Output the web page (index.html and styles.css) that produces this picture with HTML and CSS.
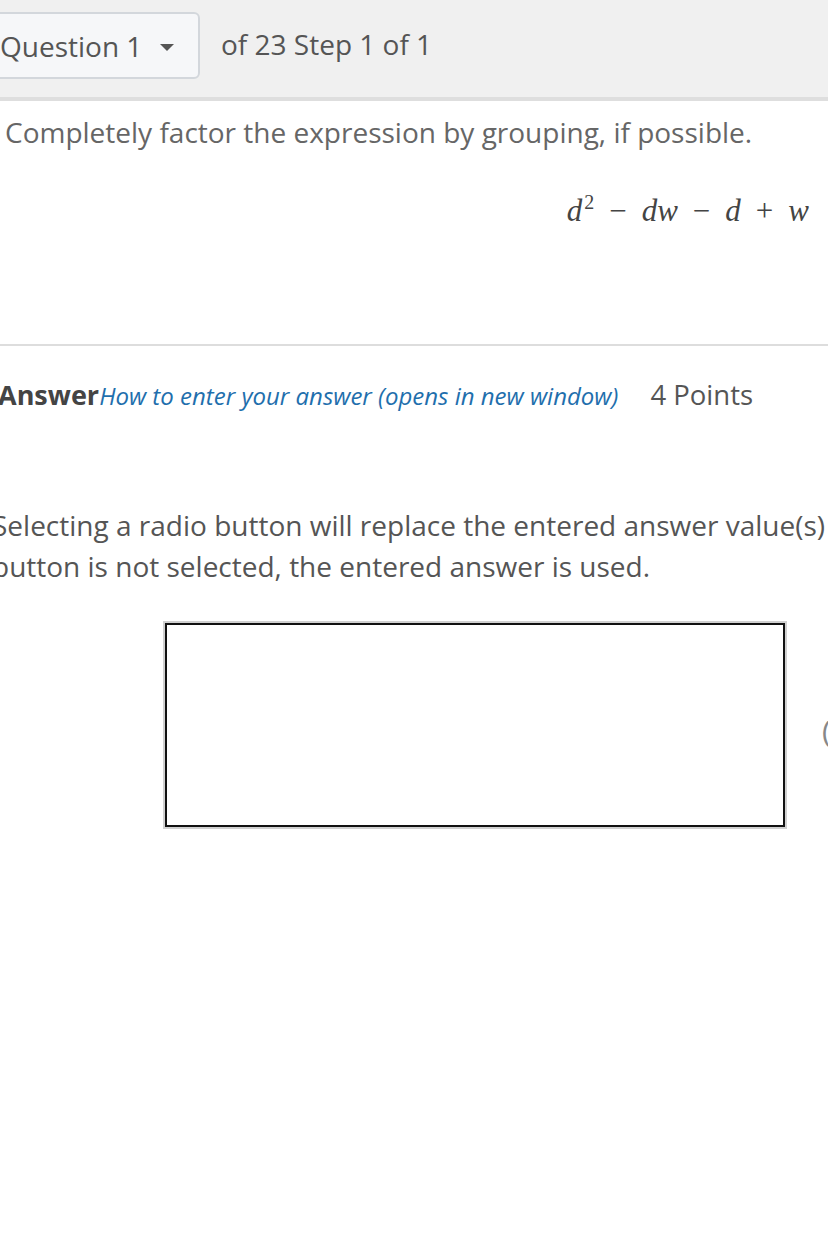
FILE: index.html
```html
<!DOCTYPE html>
<html>
<head>
<meta charset="utf-8">
<link rel="stylesheet" href="styles.css">
</head>
<body>
<div class="header">
  <div class="select">
    <span class="select-label">Question 1</span>
    <span class="caret"></span>
  </div>
  <span class="counter">of 23 Step 1 of 1</span>
</div>
<div class="question">
  <p class="prompt">Completely factor the expression by grouping, if possible.</p>
  <div class="math"><i>d</i><sup>2</sup><span class="op">−</span><i>dw</i><span class="op">−</span><i>d</i><span class="op">+</span><i>w</i></div>
</div>
<div class="answer">
  <div class="answer-head">
    <span class="answer-title">Answer</span><a class="help" href="#">How to enter your answer (opens in new window)</a>
    <span class="points">4 Points</span>
  </div>
  <p class="note">Selecting a radio button will replace the entered answer value(s) with the radio button value. If the radio<br>button is not selected, the entered answer is used.</p>
  <div class="input-row">
    <div class="input-box"></div>
    <span class="paren">(</span>
  </div>
</div>
</body>
</html>
```

FILE: styles.css
```css
html, body {
  margin: 0;
  padding: 0;
  background: #fff;
}
body {
  width: 828px;
  height: 1256px;
  overflow: hidden;
  font-family: "Open Sans", "Liberation Sans", sans-serif;
  color: #555;
}
.header {
  height: 85px;
  background: #f0f0f0;
  border-bottom: 4px solid #dedede;
  display: flex;
  align-items: flex-start;
  padding-top: 12px;
}
.select {
  margin-left: -22px;
  width: 222px;
  height: 67px;
  box-sizing: border-box;
  border: 2px solid #d3d7dc;
  border-radius: 6px;
  background: #f6f7f9;
  display: flex;
  align-items: center;
  padding-left: 20px;
}
.select-label {
  font-size: 28px;
  color: #555;
  line-height: 1;
}
.caret {
  width: 0;
  height: 0;
  border-left: 7px solid transparent;
  border-right: 7px solid transparent;
  border-top: 7px solid #555;
  margin-left: 18px;
  margin-top: 3px;
}
.counter {
  margin-left: 21px;
  font-size: 28px;
  line-height: 64px;
  color: #555;
}
.question {
  padding: 0 19px 0 5px;
  border-bottom: 2px solid #dddddd;
  height: 243px;
}
.prompt {
  margin: 0;
  padding-top: 13px;
  font-size: 28px;
  line-height: 36px;
  color: #666;
}
.math {
  margin-top: 43px;
  text-align: right;
  font-family: "Liberation Serif", "Times New Roman", serif;
  font-size: 31px;
  line-height: 36px;
  color: #444;
  white-space: nowrap;
}
.math i {
  font-style: italic;
}
.math sup {
  font-size: 20px;
  vertical-align: 12px;
  line-height: 0;
  margin-left: 2px;
}
.math .op {
  padding: 0 15px;
}
.answer {
  margin-left: -8px;
}
.answer-head {
  margin-top: 30px;
  display: flex;
  align-items: baseline;
  white-space: nowrap;
  padding-left: 6px;
}
.answer-title {
  font-weight: 700;
  font-size: 27px;
  color: #444;
}
.help {
  font-style: italic;
  font-size: 24px;
  color: #1f6fad;
  text-decoration: none;
}
.points {
  margin-left: 32px;
  font-size: 27.5px;
  color: #555;
}
.note {
  margin: 92px 0 0 0;
  width: max-content;
  white-space: nowrap;
  font-size: 28px;
  line-height: 41px;
  color: #555;
}
.input-row {
  display: flex;
  align-items: center;
  margin-top: 36px;
  padding-left: 173px;
}
.input-box {
  flex-shrink: 0;
  width: 620px;
  height: 204px;
  border: 2px solid #111;
  outline: 2px solid #d0d0d0;
  box-sizing: border-box;
  background: #fff;
}
.paren {
  margin-left: 37px;
  margin-top: 10px;
  font-size: 30px;
  color: #888;
}
```
